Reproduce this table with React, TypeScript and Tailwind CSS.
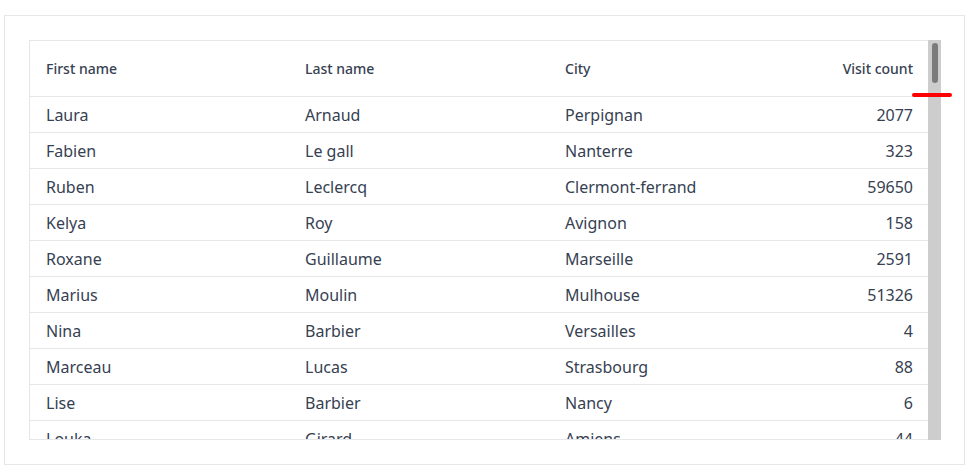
import React from 'react'

type Visitor = { first: string; last: string; city: string; visits: number }

const visitors: Visitor[] = [
    { first: 'Laura', last: 'Arnaud', city: 'Perpignan', visits: 2077 },
    { first: 'Fabien', last: 'Le gall', city: 'Nanterre', visits: 323 },
    { first: 'Ruben', last: 'Leclercq', city: 'Clermont-ferrand', visits: 59650 },
    { first: 'Kelya', last: 'Roy', city: 'Avignon', visits: 158 },
    { first: 'Roxane', last: 'Guillaume', city: 'Marseille', visits: 2591 },
    { first: 'Marius', last: 'Moulin', city: 'Mulhouse', visits: 51326 },
    { first: 'Nina', last: 'Barbier', city: 'Versailles', visits: 4 },
    { first: 'Marceau', last: 'Lucas', city: 'Strasbourg', visits: 88 },
    { first: 'Lise', last: 'Barbier', city: 'Nancy', visits: 6 },
    { first: 'Louka', last: 'Girard', city: 'Amiens', visits: 44 },
]

const cols = 'grid grid-cols-[259px_260px_1fr_1fr] items-center pl-4 pr-[15px]'

function App() {
    return (
        <div className="relative w-[970px] h-[465px] bg-white pt-[15px] pl-[4px] font-['Noto_Sans',sans-serif] text-[#364152]">
            <div className="w-[961px] h-[450px] border border-[#e5e7eb] p-6">
                <div className="flex h-[400px] w-[912px] overflow-hidden">
                    <div className="flex-1 border border-r-0 border-[#e5e7eb] overflow-hidden">
                        <div className={`${cols} h-[56px] border-b border-[#e5e7eb] text-[14px] font-medium`}>
                            <div>First name</div>
                            <div>Last name</div>
                            <div>City</div>
                            <div className="text-right">Visit count</div>
                        </div>
                        {visitors.map(v => (
                            <div key={v.first + v.last} className={`${cols} h-[36px] pt-px border-b border-[#e5e7eb] text-[16px]`}>
                                <div>{v.first}</div>
                                <div>{v.last}</div>
                                <div>{v.city}</div>
                                <div className="text-right">{v.visits}</div>
                            </div>
                        ))}
                    </div>
                    <div className="w-[13px] h-full bg-[#cdcdcd] pt-[3px] flex justify-center">
                        <div className="w-[6px] h-[40px] rounded-full bg-[#7b7b7b]" />
                    </div>
                </div>
            </div>
            <div className="absolute left-[912px] top-[93px] w-[40px] h-[4px] rounded-full bg-[#ff0000]" />
        </div>
    )
}

export default App
